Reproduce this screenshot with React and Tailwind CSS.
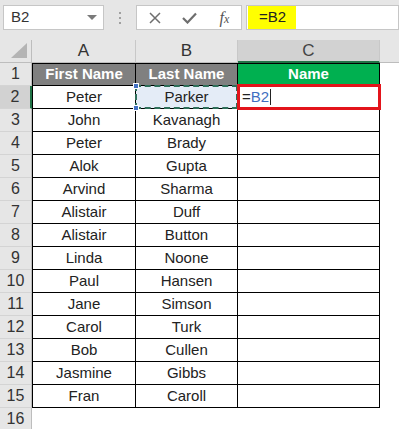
import React from "react";

const rows = [
  ["Peter", "Parker"],
  ["John", "Kavanagh"],
  ["Peter", "Brady"],
  ["Alok", "Gupta"],
  ["Arvind", "Sharma"],
  ["Alistair", "Duff"],
  ["Alistair", "Button"],
  ["Linda", "Noone"],
  ["Paul", "Hansen"],
  ["Jane", "Simson"],
  ["Carol", "Turk"],
  ["Bob", "Cullen"],
  ["Jasmine", "Gibbs"],
  ["Fran", "Caroll"],
];

function RowHead({ n, active }) {
  return (
    <div
      className={
        "h-[23px] flex items-center justify-center text-[16px] text-[#333] border-b border-[#d4d4d4] " +
        (active ? "bg-[#d2d2d2] border-r-2 border-r-[#217346]" : "bg-[#e6e6e6] border-r border-r-[#bdbdbd]")
      }
    >
      {n}
    </div>
  );
}

export default function App() {
  return (
    <div className="w-[399px] h-[429px] overflow-hidden bg-[#e6e6e6] font-['Liberation_Sans',Arial,sans-serif] text-[#222]">
      {/* Toolbar */}
      <div className="h-[40px] flex items-start pt-[5px]">
        <div className="ml-[3px] w-[101px] h-[25px] bg-white border border-[#c6c6c6] flex items-center justify-between pl-[7px] pr-[6px] text-[15px] text-[#333]">
          <span>B2</span>
          <svg width="10" height="6" viewBox="0 0 10 6">
            <path d="M0 0 L10 0 L5 5 Z" fill="#7a7a7a" />
          </svg>
        </div>
        <div className="w-[32px] h-[25px] flex flex-col items-center justify-center gap-[3px]">
          <span className="w-[2px] h-[2px] bg-[#a0a0a0]" />
          <span className="w-[2px] h-[2px] bg-[#a0a0a0]" />
          <span className="w-[2px] h-[2px] bg-[#a0a0a0]" />
        </div>
        <div className="w-[106px] h-[25px] bg-white border border-[#c6c6c6] flex items-center">
          <div className="w-[36px] flex justify-center">
            <svg width="12" height="12" viewBox="0 0 12 12">
              <path d="M1 1 L11 11 M11 1 L1 11" stroke="#6e6e6e" strokeWidth="1.5" />
            </svg>
          </div>
          <div className="w-[36px] flex justify-center">
            <svg width="15" height="12" viewBox="0 0 15 12">
              <path d="M1 6 L5.5 10.5 L14 1.5" stroke="#6e6e6e" strokeWidth="2.2" fill="none" />
            </svg>
          </div>
          <div className="w-[34px] flex justify-center">
            <span className="font-['Liberation_Serif',serif] italic text-[16px] text-[#555] leading-none">
              f<span className="text-[12px]">x</span>
            </span>
          </div>
        </div>
        <div className="ml-[4px] flex-1 h-[25px] bg-white border border-[#c6c6c6] flex items-center">
          <div className="ml-[1px] h-[23px] w-[48px] bg-[#ffff00] flex items-center pl-[11px] text-[15px] text-[#222]">
            =B2
          </div>
        </div>
      </div>

      {/* Grid */}
      <div className="grid grid-cols-[32px_104px_102px_142px_1fr] bg-white">
        {/* column headers */}
        <div className="h-[23px] bg-[#e6e6e6] border-r border-b border-[#bdbdbd] relative">
          <svg className="absolute right-[4px] bottom-[4px]" width="16" height="15" viewBox="0 0 16 15">
            <path d="M16 0 L16 15 L0 15 Z" fill="#b4b4b4" />
          </svg>
        </div>
        <div className="h-[23px] bg-[#e6e6e6] border-r border-r-[#c8c8c8] border-b border-b-[#bdbdbd] flex items-center justify-center text-[17px] text-[#333]">
          A
        </div>
        <div className="h-[23px] bg-[#e6e6e6] border-r border-r-[#c8c8c8] border-b border-b-[#bdbdbd] flex items-center justify-center text-[17px] text-[#333]">
          B
        </div>
        <div className="h-[23px] bg-[#d2d2d2] border-r border-r-[#c8c8c8] border-b-2 border-b-[#217346] flex items-center justify-center text-[17px] text-[#444]">
          C
        </div>
        <div className="h-[23px] bg-[#e6e6e6] border-b border-b-[#bdbdbd]" />

        {/* row 1 header */}
        <RowHead n={1} />
        <div className="h-[23px] bg-[#808080] border-l border-t border-r border-b border-black flex items-center justify-center text-white font-bold text-[15px]">
          First Name
        </div>
        <div className="h-[23px] bg-[#808080] border-t border-r border-b border-black flex items-center justify-center text-white font-bold text-[15px]">
          Last Name
        </div>
        <div className="h-[23px] bg-[#00b050] border-t border-r border-b border-black flex items-center justify-center text-white font-bold text-[15px]">
          Name
        </div>
        <div className="h-[23px]" />

        {rows.map(([f, l], i) => {
          const n = i + 2;
          const isSel = n === 2;
          return (
            <React.Fragment key={n}>
              <RowHead n={n} active={isSel} />
              <div className="h-[23px] border-l border-r border-b border-black flex items-center justify-center text-[15px] text-[#222]">
                {f}
              </div>
              {isSel ? (
                <div className="h-[23px] border-r border-b border-black relative bg-[#e4ecf7] flex items-center justify-center text-[15px] text-[#222]">
                  <div className="absolute -top-[1px] -left-[1px] -right-[1px] -bottom-[1px] border-2 border-dashed border-[#2f6f5a]" />
                  <span className="absolute -left-[3px] -top-[3px] w-[6px] h-[6px] bg-[#4472c4] border border-white" />
                  <span className="absolute -left-[3px] -bottom-[3px] w-[6px] h-[6px] bg-[#4472c4] border border-white" />
                  <span className="relative">{l}</span>
                </div>
              ) : (
                <div className="h-[23px] border-r border-b border-black flex items-center justify-center text-[15px] text-[#222]">
                  {l}
                </div>
              )}
              {isSel ? (
                <div className="h-[23px] border-r border-b border-black relative flex items-center pl-[4px] text-[15px]">
                  <div className="absolute -top-[2px] -left-[1px] -right-[2px] -bottom-[2px] border-[3px] border-[#e3141b]" />
                  <span className="relative text-[#222]">=</span>
                  <span className="relative text-[#3f6fc0]">B2</span>
                  <span className="relative w-[1px] h-[16px] bg-[#222] ml-[1px]" />
                </div>
              ) : (
                <div className="h-[23px] border-r border-b border-black" />
              )}
              <div className="h-[23px]" />
            </React.Fragment>
          );
        })}

        <RowHead n={16} />
        <div className="h-[23px]" />
        <div className="h-[23px]" />
        <div className="h-[23px]" />
        <div className="h-[23px]" />
      </div>
    </div>
  );
}
